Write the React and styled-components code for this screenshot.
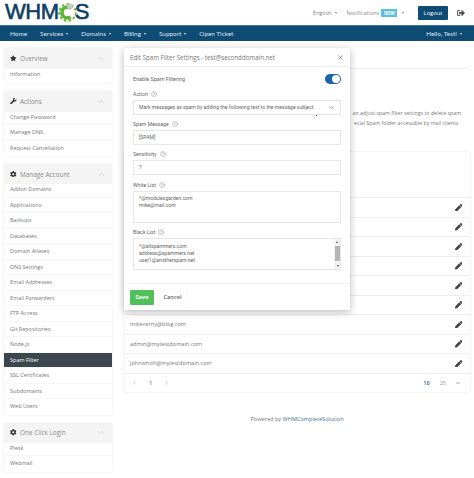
import React from 'react';
import styled, { createGlobalStyle } from 'styled-components';
import { FaStar, FaWrench, FaCog, FaPen, FaSignOutAlt } from 'react-icons/fa';
import { FiChevronUp, FiChevronDown, FiChevronLeft, FiChevronRight, FiX, FiHelpCircle } from 'react-icons/fi';

const Global = createGlobalStyle`
  html, body { margin: 0; padding: 0; background: #fff; }
  body { font-family: "Open Sans", sans-serif; color: #555; overflow: hidden; }
  * { box-sizing: border-box; }
`;

const Page = styled.div`
  position: relative;
  width: 474px;
  height: 478px;
  overflow: hidden;
`;

const TopBar = styled.div`
  height: 25px;
  display: flex;
  align-items: center;
  justify-content: space-between;
  padding: 0 9px 0 5px;
`;

const Logo = styled.div`
  display: flex;
  align-items: center;
  font-family: "Liberation Sans", sans-serif;
  font-size: 22px;
  line-height: 1.1;
  letter-spacing: -0.4px;
  color: #0e3f63;
  -webkit-text-stroke: 0.6px #0e3f63;
  svg { margin: 0 -2px 0 -1px; }
`;

const TopLinks = styled.div`
  display: flex;
  align-items: center;
  font-size: 5.6px;
  color: #888;
`;

const TopLink = styled.span`
  margin-right: ${p => p.$gap}px;
  white-space: nowrap;
`;

const NewBadge = styled.span`
  display: inline-block;
  background: #5bc0de;
  color: #fff;
  font-size: 4.5px;
  font-weight: 700;
  padding: 1px 2.5px;
  margin: 0 2px 0 2px;
`;

const Logout = styled.span`
  background: #0e4c76;
  color: #fff;
  font-size: 5.8px;
  width: 30px;
  height: 14px;
  line-height: 14px;
  text-align: center;
  margin: 0 9px 0 14px;
  border-radius: 1px;
`;

const Nav = styled.nav`
  height: 16px;
  background: #0e4c76;
  display: flex;
  align-items: center;
  justify-content: space-between;
  padding: 0 12px 0 10px;
  color: #dbe6ee;
  font-family: "Lato", sans-serif;
  font-size: 6.4px;
  border-top: 1px solid #3d7299;
`;

const NavGroup = styled.div`
  display: flex;
  gap: 13px;
`;

const Caret = styled.span`
  display: inline-block;
  width: 0;
  height: 0;
  margin-left: 3px;
  vertical-align: middle;
  border-left: 1.5px solid transparent;
  border-right: 1.5px solid transparent;
  border-top: 2px solid currentColor;
`;

const Content = styled.div`
  display: flex;
  gap: 12px;
  padding: 7px 4px 0;
`;

const Sidebar = styled.aside`
  width: 108px;
  flex: none;
  display: flex;
  flex-direction: column;
  gap: 8px;
`;

const Panel = styled.section`
  background: #fff;
  box-shadow: 0 0 2px rgba(0, 0, 0, 0.1);
`;

const PanelHead = styled.div`
  height: ${p => p.$h}px;
  background: #f4f4f4;
  display: flex;
  align-items: center;
  padding: 0 6px;
  font-size: 6.4px;
  color: #8a8a8a;
  svg:first-child { color: #333; font-size: 6.5px; margin-right: 3.5px; }
  svg:last-child { margin-left: auto; color: #c8c8c8; font-size: 9px; }
`;

const ItemList = styled.div`
  overflow: hidden;
`;

const Item = styled.div`
  height: 15.5px;
  line-height: 15.5px;
  padding: 0 6px;
  font-size: 5.5px;
  color: ${p => (p.$active ? '#fff' : '#777')};
  background: ${p => (p.$active ? '#3c464e' : 'transparent')};
  border-bottom: 1px solid #f6f6f6;
  &:first-child { margin-top: -2px; }
  &:last-child { border-bottom: 0; }
`;

const Main = styled.main`
  flex: 1;
  min-width: 0;
`;

const MainHead = styled.div`
  height: 21px;
  margin-right: 2px;
  border-bottom: 1px solid #eee;
`;

const Intro = styled.p`
  margin: 39px 0 0;
  height: 26px;
  font-size: 5.25px;
  line-height: 10px;
  color: #777;
  text-align: right;
  padding-right: 9px;
`;

const TableCard = styled.div`
  margin-top: 18px;
  box-shadow: 0 0 2px rgba(0, 0, 0, 0.12);
  padding-top: 45px;
`;

const Row = styled.div`
  height: 19.5px;
  display: flex;
  align-items: center;
  justify-content: space-between;
  padding: 0 8px 0 6px;
  border-top: 1px solid #eee;
  font-size: 5.6px;
  color: #777;
  svg { color: #444; font-size: 7.5px; }
`;

const Pager = styled.div`
  height: 19px;
  display: flex;
  align-items: center;
  padding: 0 10px 0 7px;
  border-top: 1px solid #eee;
  font-size: 5.6px;
  color: #777;
  svg { color: #aaa; font-size: 7px; }
`;

const PageNo = styled.span`
  margin: 0 11px;
  font-weight: 600;
`;

const Sizes = styled.div`
  margin-left: auto;
  display: flex;
  align-items: center;
  gap: 10px;
`;

const Size = styled.span`
  color: ${p => (p.$on ? '#2e6591' : '#999')};
  font-weight: ${p => (p.$on ? 600 : 400)};
`;

const Footer = styled.footer`
  margin-top: 23px;
  text-align: center;
  font-size: 5.6px;
  color: #777;
  a { color: #3d7299; text-decoration: none; }
`;

const Modal = styled.div`
  position: absolute;
  left: 124px;
  top: 48px;
  width: 226px;
  height: 262px;
  background: #fff;
  box-shadow: 0 2px 8px rgba(0, 0, 0, 0.28);
  font-family: "Roboto", sans-serif;
`;

const ModalHead = styled.div`
  height: 19px;
  display: flex;
  align-items: center;
  justify-content: space-between;
  padding: 0 6px;
  border-bottom: 1px solid #eee;
  font-family: "Open Sans", sans-serif;
  font-size: 6.2px;
  color: #777;
  svg { font-size: 7px; color: #555; }
`;

const ModalBody = styled.div`
  padding: 0 9px;
`;

const SwitchRow = styled.div`
  display: flex;
  align-items: center;
  justify-content: space-between;
  height: 23px;
  font-size: 5.4px;
  color: #666;
`;

const Switch = styled.span`
  width: 16px;
  height: 10px;
  border-radius: 5px;
  background: #1c62ad;
  display: flex;
  justify-content: flex-end;
  padding: 1px;
  &::after {
    content: '';
    width: 8px;
    height: 8px;
    border-radius: 50%;
    background: #fff;
  }
`;

const Label = styled.div`
  display: flex;
  align-items: center;
  gap: 3px;
  height: 8px;
  margin-bottom: 2px;
  font-size: 5.2px;
  color: #666;
  svg { font-size: 6px; color: #999; }
`;

const Field = styled.div`
  height: ${p => p.$h || 15}px;
  margin-bottom: ${p => p.$mb ?? 5}px;
  border: 1px solid #e6e6e6;
  padding: ${p => (p.$area ? '3.5px 5px' : '0 5px')};
  display: flex;
  align-items: ${p => (p.$area ? 'flex-start' : 'center')};
  justify-content: space-between;
  font-size: 5.1px;
  line-height: 7.2px;
  color: #666;
  white-space: ${p => (p.$area ? 'pre-line' : 'nowrap')};
  position: relative;
  svg { font-size: 7px; color: #555; flex: none; }
`;

const Scrollbar = styled.span`
  position: absolute;
  top: 0;
  right: 0;
  bottom: 0;
  width: 6px;
  background: #f3f3f3;
  &::before {
    content: '';
    position: absolute;
    top: 2px;
    left: 1.5px;
    border-left: 1.5px solid transparent;
    border-right: 1.5px solid transparent;
    border-bottom: 2px solid #555;
  }
  &::after {
    content: '';
    position: absolute;
    top: 7px;
    left: 0.5px;
    width: 5px;
    height: 15px;
    background: #b5b5b5;
  }
`;

const ScrollDown = styled.span`
  position: absolute;
  bottom: 2px;
  right: 1.5px;
  border-left: 1.5px solid transparent;
  border-right: 1.5px solid transparent;
  border-top: 2px solid #555;
`;

const ModalFoot = styled.div`
  margin-top: 13px;
  padding: 6px 6px 0;
  border-top: 1px solid #f4f4f4;
  display: flex;
  gap: 4px;
`;

const Btn = styled.span`
  height: 15px;
  line-height: 15px;
  text-align: center;
  font-family: "Open Sans", sans-serif;
  font-size: 5.6px;
  font-weight: ${p => (p.$primary ? 700 : 600)};
  width: ${p => (p.$primary ? 24 : 29)}px;
  color: ${p => (p.$primary ? '#fff' : '#666')};
  background: ${p => (p.$primary ? '#4fc05a' : '#fff')};
  border-radius: 1px;
  box-shadow: ${p => (p.$primary ? 'none' : '0 0 1px rgba(0,0,0,.2)')};
`;

const CursorDot = styled.span`
  position: absolute;
  left: 192px;
  top: 67px;
  width: 1px;
  height: 1px;
  background: #333;
`;

const sections = [
  { title: 'Overview', icon: <FaStar />, h: 21, items: ['Information'] },
  { title: 'Actions', icon: <FaWrench />, h: 21, items: ['Change Password', 'Manage DNS', 'Request Cancellation'] },
  {
    title: 'Manage Account',
    icon: <FaCog />,
    h: 20,
    items: ['Addon Domains', 'Applications', 'Backups', 'Databases', 'Domain Aliases', 'DNS Settings', 'Email Addresses', 'Email Forwarders', 'FTP Access', 'Git Repositories', 'Node.js', 'Spam Filter', 'SSL Certificates', 'Subdomains', 'Web Users'],
  },
  { title: 'One Click Login', icon: <FaCog />, h: 20, items: ['Plesk', 'Webmail'] },
];

const rows = ['', '', '', '', '', '', 'mikecerny@blog.com', 'admin@mytestdomain.com', 'johnsmith@mytestdomain.com'];

export default function App() {
  return (
    <Page>
      <Global />
      <TopBar>
        <Logo>
          WHM
          <svg width="19" height="19" viewBox="0 0 24 24" aria-hidden="true">
            <circle cx="12" cy="12" r="7" fill="none" stroke="#5cb531" strokeWidth="4.5" strokeDasharray="31 13" strokeDashoffset="-6.5" />
            <circle cx="12" cy="12" r="10.5" fill="none" stroke="#5cb531" strokeWidth="2.5" strokeDasharray="3 3" />
            <circle cx="15" cy="4" r="3.5" fill="#c9c9c9" />
          </svg>
          S
        </Logo>
        <TopLinks>
          <TopLink $gap={10}>English<Caret /></TopLink>
          <TopLink $gap={0}>Notifications<NewBadge>NEW</NewBadge><Caret /></TopLink>
          <Logout>Logout</Logout>
          <FaSignOutAlt size={8} color="#555" />
        </TopLinks>
      </TopBar>
      <Nav>
        <NavGroup>
          <span>Home</span>
          <span>Services<Caret /></span>
          <span>Domains<Caret /></span>
          <span>Billing<Caret /></span>
          <span>Support<Caret /></span>
          <span>Open Ticket</span>
        </NavGroup>
        <span>Hello, Test!<Caret /></span>
      </Nav>
      <Content>
        <Sidebar>
          {sections.map(s => (
            <Panel key={s.title}>
              <PanelHead $h={s.h}>
                {s.icon}
                {s.title}
                <FiChevronUp />
              </PanelHead>
              <ItemList>
                {s.items.map(i => (
                  <Item key={i} $active={i === 'Spam Filter'}>{i}</Item>
                ))}
              </ItemList>
            </Panel>
          ))}
        </Sidebar>
        <Main>
          <MainHead />
          <Intro>
            an adjust spam filter settings to delete spam<br />
            ecial Spam folder accessible by mail clients&nbsp;&nbsp;
          </Intro>
          <TableCard>
            {rows.map((r, i) => (
              <Row key={i}>
                <span>{r}</span>
                <FaPen />
              </Row>
            ))}
            <Pager>
              <FiChevronLeft />
              <PageNo>1</PageNo>
              <FiChevronRight />
              <Sizes>
                <Size $on>10</Size>
                <Size>25</Size>
                <Size>∞</Size>
              </Sizes>
            </Pager>
          </TableCard>
          <Footer>Powered by <a href="#w">WHMCompleteSolution</a></Footer>
        </Main>
      </Content>
      <Modal>
        <ModalHead>
          Edit Spam Filter Settings - test@seconddomain.net
          <FiX />
        </ModalHead>
        <ModalBody>
          <SwitchRow>Enable Spam Filtering<Switch /></SwitchRow>
          <Label>Action <FiHelpCircle /></Label>
          <Field>
            Mark messages as spam by adding the following text to the message subject
            <FiChevronDown />
          </Field>
          <Label>Spam Message <FiHelpCircle /></Label>
          <Field>[SPAM]</Field>
          <Label>Sensitivity <FiHelpCircle /></Label>
          <Field $mb={5.5}>7</Field>
          <Label>White List <FiHelpCircle /></Label>
          <Field $area $h={32} $mb={5.5}>{'*@modulesgarden.com\nmike@mail.com'}</Field>
          <Label>Black List <FiHelpCircle /></Label>
          <Field $area $h={32} $mb={0}>
            {'*@allspammers.com\naddress@spammers.net\nuser1@anotherspam.net'}
            <Scrollbar><ScrollDown /></Scrollbar>
          </Field>
        </ModalBody>
        <ModalFoot>
          <Btn $primary>Save</Btn>
          <Btn>Cancel</Btn>
        </ModalFoot>
        <CursorDot />
      </Modal>
    </Page>
  );
}
